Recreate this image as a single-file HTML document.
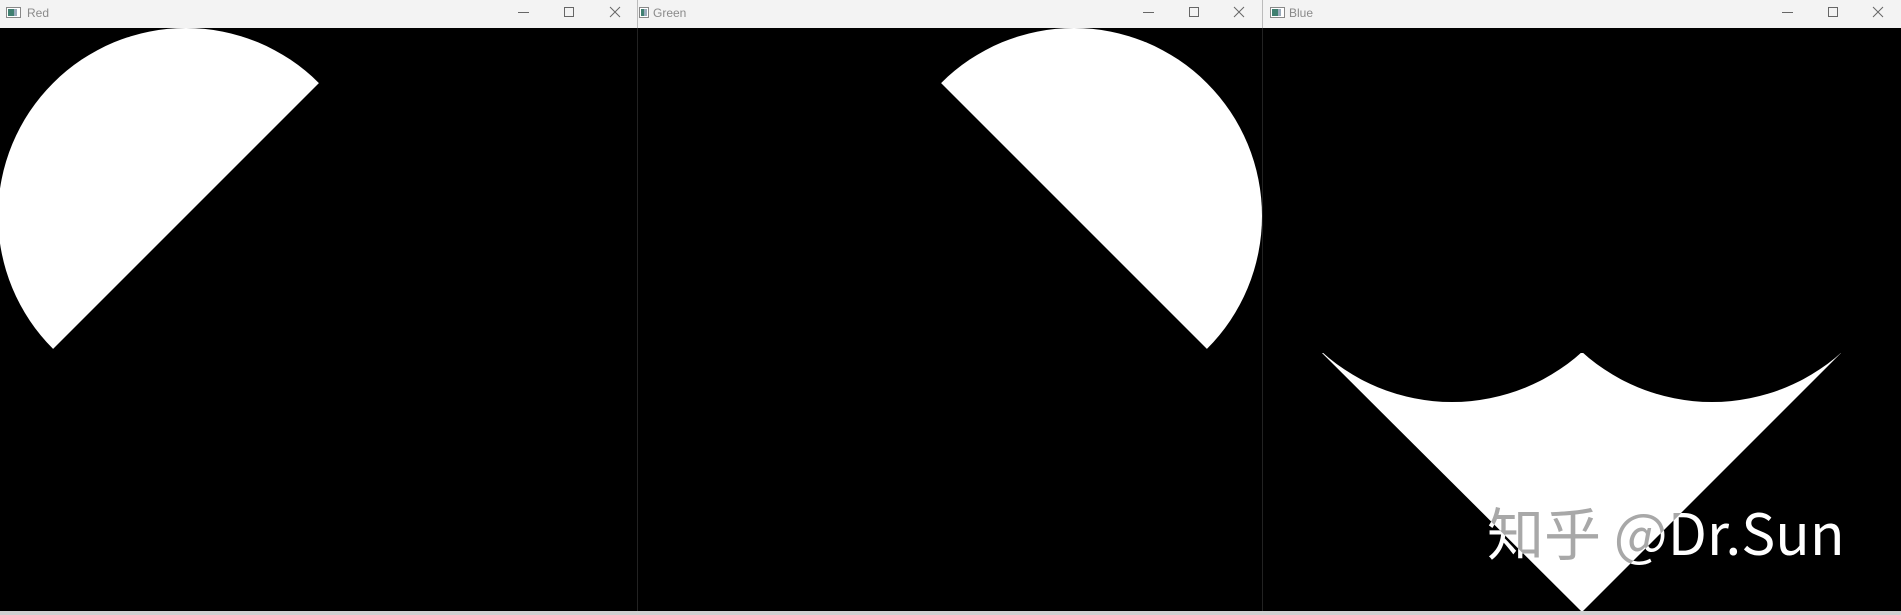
<!DOCTYPE html>
<html><head><meta charset="utf-8"><style>
html,body{margin:0;padding:0;background:#000;width:1901px;height:615px;overflow:hidden}
svg{display:block}
</style></head><body>
<svg width="1901" height="615" viewBox="0 0 1901 615" xmlns="http://www.w3.org/2000/svg">
<defs>
<clipPath id="cr"><rect x="0" y="28" width="637" height="583"/></clipPath>
<clipPath id="cg"><rect x="639" y="28" width="623" height="583"/></clipPath>
<clipPath id="cb"><rect x="1263" y="28" width="638" height="583"/></clipPath>
<clipPath id="tri"><polygon points="1322,353 1841,353 1582,612"/></clipPath>
<mask id="notri"><rect x="0" y="0" width="1901" height="615" fill="#fff"/><polygon points="1322,353 1841,353 1582,612" fill="#000"/></mask>
</defs>
<rect width="1901" height="615" fill="#000"/>
<g clip-path="url(#cr)">
<circle cx="186" cy="216" r="188" fill="#fff"/>
<polygon points="402,0 -200,602 700,602 700,0" fill="#000"/>
</g>
<g clip-path="url(#cg)">
<circle cx="1074" cy="216" r="188" fill="#fff"/>
<polygon points="858,0 1460,602 500,602 500,0" fill="#000"/>
</g>
<g clip-path="url(#cb)">
<polygon points="1322,353 1841,353 1582,612" fill="#fff"/>
<circle cx="1452" cy="208" r="194" fill="#000"/>
<circle cx="1712" cy="208" r="194" fill="#000"/>
</g>
<g font-family="'Noto Sans CJK SC',sans-serif" font-size="57">
<text x="1487" y="555" fill="#fff" mask="url(#notri)">知乎 @Dr.Sun</text>
<text x="1487" y="555" fill="#a8a8a8" clip-path="url(#tri)">知乎 @Dr.Sun</text>
</g>
<rect x="0" y="0" width="1901" height="28" fill="#f3f3f3"/>
<rect x="637" y="28" width="1" height="583" fill="#222"/>
<rect x="1262" y="28" width="1" height="583" fill="#222"/>
<rect x="637" y="0" width="1" height="28" fill="#bbb"/>
<rect x="1262" y="0" width="1" height="28" fill="#bbb"/>
<rect x="0" y="611" width="1901" height="4" fill="#d0d0d0"/>
<g font-family="'Liberation Sans',sans-serif" font-size="12" fill="#8a8a8a">
<text x="27" y="17">Red</text>
<text x="653" y="17">Green</text>
<text x="1289" y="17">Blue</text>
</g>
<g>
<rect x="6.5" y="7.5" width="14" height="10" fill="#fff" stroke="#888"/><rect x="8" y="9" width="6" height="7" fill="#3f7f70"/><rect x="14" y="9" width="3" height="7" fill="#9ab"/>
<rect x="639.5" y="7.5" width="9" height="10" fill="#fff" stroke="#888"/><rect x="641" y="9" width="3" height="7" fill="#3f7f70"/><rect x="644" y="9" width="3" height="7" fill="#9ab"/>
<rect x="1270.5" y="7.5" width="14" height="10" fill="#fff" stroke="#888"/><rect x="1272" y="9" width="6" height="7" fill="#3f7f70"/><rect x="1278" y="9" width="3" height="7" fill="#9ab"/>
</g>
<g stroke="#666" stroke-width="1" fill="none">
<line x1="518" y1="12.5" x2="529" y2="12.5"/><rect x="564.5" y="7.5" width="9" height="9"/><path d="M610 7 L620 17 M620 7 L610 17"/>
<line x1="1143" y1="12.5" x2="1154" y2="12.5"/><rect x="1189.5" y="7.5" width="9" height="9"/><path d="M1234 7 L1244 17 M1244 7 L1234 17"/>
<line x1="1782" y1="12.5" x2="1793" y2="12.5"/><rect x="1828.5" y="7.5" width="9" height="9"/><path d="M1873 7 L1883 17 M1883 7 L1873 17"/>
</g>
</svg>
</body></html>
